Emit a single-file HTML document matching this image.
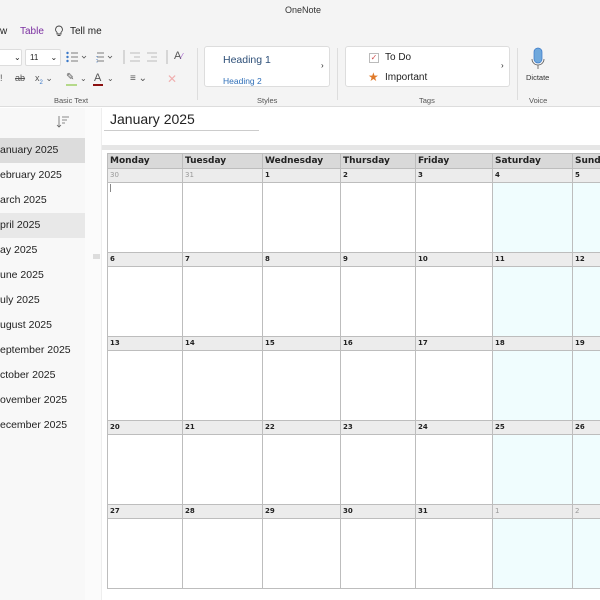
<!DOCTYPE html>
<html><head><meta charset="utf-8"><style>
*{margin:0;padding:0;box-sizing:border-box}
body{width:600px;height:600px;overflow:hidden;position:relative;background:#fff;font-family:"Liberation Sans",sans-serif;color:#222}
.a{position:absolute;white-space:nowrap}
.cal{position:absolute;left:107px;top:153px;width:545px;table-layout:fixed;border-collapse:collapse;font-family:"DejaVu Sans","Liberation Sans",sans-serif}
.cal td{border:1px solid #bdbdbd;padding:0 2px;vertical-align:top;overflow:hidden;white-space:nowrap}
.cal .h td{background:#d9d9d9;height:15px;font-size:9px;font-weight:bold;line-height:14px}
.cal .d td{background:#ececec;height:14px;font-size:7px;font-weight:bold;line-height:13px}
.cal .d td.g{color:#999;font-weight:normal}
.cal .b td{height:70px}
.cal .b td.w{background:#f0fdfe}
.side div{position:absolute;left:0;width:85px;height:25px;font-size:10.5px;line-height:25px;color:#222}
</style></head><body>
<div class="a" style="left:0;top:0;width:600px;height:107px;background:#f4f4f4;border-bottom:1px solid #ddd"></div>
<div class="a" style="left:285px;top:5px;font-size:9px;color:#333">OneNote</div>
<div class="a" style="left:0;top:26px;font-size:10px">w</div>
<div class="a" style="left:20px;top:26px;font-size:10px;color:#7a2ea0">Table</div>
<svg class="a" style="left:54px;top:25px" width="10" height="13"><path d="M5 1a3.5 3.5 0 0 0-2 6.3V9h4V7.3A3.5 3.5 0 0 0 5 1zM3.5 10.5h3" fill="none" stroke="#444" stroke-width="0.9"/></svg>
<div class="a" style="left:70px;top:26px;font-size:10px">Tell me</div>
<div class="a" style="left:-4px;top:49px;width:26px;height:17px;background:#fff;border:1px solid #ddd;border-radius:2px;font-size:8px;padding:3px 0 0 17px">⌄</div>
<div class="a" style="left:25px;top:49px;width:36px;height:17px;background:#fff;border:1px solid #ddd;border-radius:2px;font-size:8px;padding:3px 0 0 4px">11 <span style="margin-left:10px">⌄</span></div>
<svg class="a" style="left:66px;top:50px" width="130" height="40">
<g fill="#3a78c8"><circle cx="1.5" cy="3" r="1.2"/><circle cx="1.5" cy="7" r="1.2"/><circle cx="1.5" cy="11" r="1.2"/></g>
<g stroke="#555" stroke-width="0.8" fill="none"><path d="M5 3h7M5 7h7M5 11h7M16 6l2 2 2-2M31 3h7M31 7h7M31 11h7M42 6l2 2 2-2"/></g>
<g stroke="#aaa" stroke-width="0.8"><path d="M64 3h10M68 7h6M64 11h10M81 3h10M85 7h6M81 11h10M58 0v14M101 0v14"/></g>
<text x="27" y="12" font-size="8" fill="#3a78c8">⋮</text>
</svg>
<div class="a" style="left:174px;top:50px;font-size:11px;color:#555">A<span style="color:#9b4fc8;font-size:8px">⁄</span></div>
<div class="a" style="left:0;top:73px;font-size:9px;color:#555">!&nbsp;&nbsp;&nbsp;&nbsp;&nbsp;<s>ab</s>&nbsp;&nbsp;&nbsp;&nbsp;x<sub style="font-size:6px;color:#3a78c8">2</sub> ⌄</div>
<div class="a" style="left:66px;top:72px;font-size:10px;color:#555">✎</div>
<div class="a" style="left:66px;top:84px;width:11px;height:2px;background:#b5d98a"></div>
<div class="a" style="left:80px;top:74px;font-size:8px;color:#555">⌄</div>
<div class="a" style="left:94px;top:72px;font-size:11px;color:#555">A</div>
<div class="a" style="left:93px;top:84px;width:10px;height:2px;background:#8b1010"></div>
<div class="a" style="left:107px;top:74px;font-size:8px;color:#555">⌄</div>
<div class="a" style="left:130px;top:73px;font-size:10px;color:#555">≡ ⌄</div>
<div class="a" style="left:167px;top:72px;font-size:12px;color:#f0b0b0">✕</div>
<div class="a" style="left:54px;top:96px;font-size:7.5px;color:#555">Basic Text</div>
<div class="a" style="left:197px;top:48px;width:1px;height:52px;background:#ddd"></div>
<div class="a" style="left:204px;top:46px;width:126px;height:41px;background:#fff;border:1px solid #ddd;border-radius:3px"></div>
<div class="a" style="left:223px;top:54px;font-size:10.5px;color:#2d4f78">Heading 1</div>
<div class="a" style="left:223px;top:76px;font-size:8.5px;color:#2f6fb8">Heading 2</div>
<div class="a" style="left:321px;top:61px;font-size:8px">›</div>
<div class="a" style="left:257px;top:96px;font-size:7.5px;color:#555">Styles</div>
<div class="a" style="left:337px;top:48px;width:1px;height:52px;background:#ddd"></div>
<div class="a" style="left:345px;top:46px;width:165px;height:41px;background:#fff;border:1px solid #ddd;border-radius:3px"></div>
<div class="a" style="left:369px;top:53px;width:10px;height:10px;border:1px solid #bbb;font-size:8px;color:#d05050;line-height:8px;text-align:center">✓</div>
<div class="a" style="left:385px;top:52px;font-size:10px">To Do</div>
<div class="a" style="left:368px;top:70px;font-size:12px;color:#e07a2a">★</div>
<div class="a" style="left:385px;top:72px;font-size:10px">Important</div>
<div class="a" style="left:501px;top:61px;font-size:8px">›</div>
<div class="a" style="left:419px;top:96px;font-size:7.5px;color:#555">Tags</div>
<div class="a" style="left:517px;top:48px;width:1px;height:52px;background:#ddd"></div>
<svg class="a" style="left:530px;top:47px" width="16" height="24"><rect x="4" y="1" width="8" height="15" rx="4" fill="#6fa8dc" stroke="#3a78c8" stroke-width="0.7"/><path d="M2 12a6 6 0 0 0 12 0M8 18v4" fill="none" stroke="#555" stroke-width="0.8"/></svg>
<div class="a" style="left:526px;top:73px;font-size:7.5px;color:#333">Dictate</div>
<div class="a" style="left:529px;top:96px;font-size:7.5px;color:#555">Voice</div>
<div class="a" style="left:0;top:108px;width:85px;height:492px;background:#f8f8f8"></div>
<div class="a" style="left:85px;top:108px;width:17px;height:492px;background:#fbfbfb;border-right:1px solid #eee"></div>
<svg class="a" style="left:56px;top:115px" width="14" height="14"><path d="M3 1v11M1 10l2 2 2-2M6 2h7M6 5h5M6 8h3" fill="none" stroke="#666" stroke-width="0.8"/></svg>
<div class="side">
<div style="top:138px;background:#dcdcdc">anuary 2025</div>
<div style="top:163px">ebruary 2025</div>
<div style="top:188px">arch 2025</div>
<div style="top:213px;background:#e8e8e8">pril 2025</div>
<div style="top:238px">ay 2025</div>
<div style="top:263px">une 2025</div>
<div style="top:288px">uly 2025</div>
<div style="top:313px">ugust 2025</div>
<div style="top:338px">eptember 2025</div>
<div style="top:363px">ctober 2025</div>
<div style="top:388px">ovember 2025</div>
<div style="top:413px">ecember 2025</div>
</div>
<div class="a" style="left:93px;top:254px;width:7px;height:5px;background:#ddd"></div>
<div class="a" style="left:110px;top:111px;font-size:14px;color:#222">January 2025</div>
<div class="a" style="left:104px;top:130px;width:155px;height:1px;background:#ccc"></div>
<div class="a" style="left:102px;top:145px;width:498px;height:5px;background:#e6e6e6"></div>
<table class="cal">
<colgroup><col style="width:75px"><col style="width:80px"><col style="width:78px"><col style="width:75px"><col style="width:77px"><col style="width:80px"><col style="width:80px"></colgroup>
<tr class="h"><td>Monday</td><td>Tuesday</td><td>Wednesday</td><td>Thursday</td><td>Friday</td><td>Saturday</td><td>Sunday</td></tr>
<tr class="d"><td class="g">30</td><td class="g">31</td><td>1</td><td>2</td><td>3</td><td>4</td><td>5</td></tr>
<tr class="b"><td></td><td></td><td></td><td></td><td></td><td class="w"></td><td class="w"></td></tr>
<tr class="d"><td>6</td><td>7</td><td>8</td><td>9</td><td>10</td><td>11</td><td>12</td></tr>
<tr class="b"><td></td><td></td><td></td><td></td><td></td><td class="w"></td><td class="w"></td></tr>
<tr class="d"><td>13</td><td>14</td><td>15</td><td>16</td><td>17</td><td>18</td><td>19</td></tr>
<tr class="b"><td></td><td></td><td></td><td></td><td></td><td class="w"></td><td class="w"></td></tr>
<tr class="d"><td>20</td><td>21</td><td>22</td><td>23</td><td>24</td><td>25</td><td>26</td></tr>
<tr class="b"><td></td><td></td><td></td><td></td><td></td><td class="w"></td><td class="w"></td></tr>
<tr class="d"><td>27</td><td>28</td><td>29</td><td>30</td><td>31</td><td class="g">1</td><td class="g">2</td></tr>
<tr class="b"><td></td><td></td><td></td><td></td><td></td><td class="w"></td><td class="w"></td></tr>
</table>
<div class="a" style="left:110px;top:184px;width:1px;height:8px;background:#888"></div>
</body></html>
